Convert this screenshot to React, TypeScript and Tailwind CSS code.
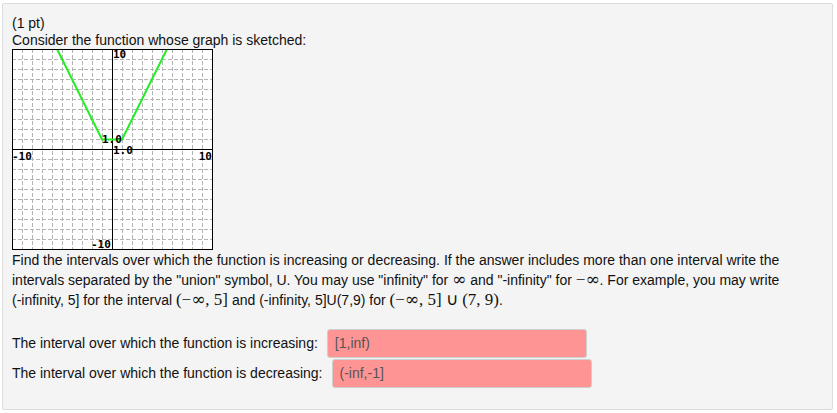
import React from "react";

const ticks = Array.from({ length: 21 }, (_, i) => i * 10);

function Graph() {
  return (
    <svg width="201" height="201" viewBox="0 0 201 201" className="block">
      <rect x="0" y="0" width="201" height="201" fill="#ffffff" />
      {/* grid */}
      {ticks.map((t) => (
        <g key={t} stroke="#b4b4b4" strokeWidth="1" strokeDasharray="4 2">
          <line x1={t + 0.5} y1="0" x2={t + 0.5} y2="201" />
          <line x1="0" y1={t + 0.5} x2="201" y2={t + 0.5} />
        </g>
      ))}
      {/* axes */}
      <line x1="100.5" y1="0" x2="100.5" y2="201" stroke="#000" strokeWidth="1" />
      <line x1="0" y1="100.5" x2="201" y2="100.5" stroke="#000" strokeWidth="1" />
      {/* function */}
      <polyline
        points="45,0 90,90.5 110,90.5 155,0"
        fill="none"
        stroke="#22ee22"
        strokeWidth="2"
      />
      {/* labels */}
      <g
        fontFamily='"DejaVu Sans Mono", "Liberation Mono", monospace'
        fontWeight="bold"
        fontSize="11"
        fill="#000"
      >
        <text x="101" y="9">10</text>
        <text x="90" y="94">1.0</text>
        <text x="101" y="105">1.0</text>
        <text x="0" y="111">-10</text>
        <text x="200" y="111" textAnchor="end">10</text>
        <text x="79" y="199">-10</text>
      </g>
      {/* frame */}
      <rect x="0.5" y="0.5" width="200" height="200" fill="none" stroke="#000" strokeWidth="1" />
    </svg>
  );
}

function M({ children }: { children: React.ReactNode }) {
  return (
    <span className="font-['Liberation_Serif',serif] text-[17px] leading-none">{children}</span>
  );
}

function Inf() {
  return <span className="font-['DejaVu_Serif',serif] text-[17px] leading-none">∞</span>;
}

function AnswerRow({ label, value }: { label: string; value: string }) {
  return (
    <div className="flex items-center h-[30px]">
      <span>{label}</span>
      <div className="ml-[9px] w-[260px] h-[29px] rounded-[3px] border border-[#cfcfcf] bg-[#ff9494] px-[7px] flex items-center text-[#555]">
        {value}
      </div>
    </div>
  );
}

export default function App() {
  return (
    <div className="w-[837px] h-[413px] bg-white pt-[3px] pl-[2px] pr-[4px] pb-[3px] font-['Liberation_Sans',Arial,sans-serif] text-[14px] text-[#111]">
      <div className="h-full border border-[#dcdcdc] rounded-[2px] bg-[#f4f4f4] pl-[9px] pt-[11px]">
        <div className="leading-[16px]">(1 pt)</div>
        <div className="leading-[18px]">Consider the function whose graph is sketched:</div>
        <Graph />
        <p className="leading-[20px] whitespace-nowrap">
          Find the intervals over which the function is increasing or decreasing. If the answer includes more than one interval write the
          <br />
          intervals separated by the "union" symbol, U. You may use "infinity" for <Inf /> and "-infinity" for <M>−</M><Inf />. For example, you may write
          <br />
          (-infinity, 5] for the interval <M>(−</M><Inf /><M>, 5]</M> and (-infinity, 5]U(7,9) for <M>(−</M><Inf /><M>, 5] ∪ (7, 9)</M>.
        </p>
        <div className="mt-[18px]">
          <AnswerRow label="The interval over which the function is increasing:" value="[1,inf)" />
          <AnswerRow label="The interval over which the function is decreasing:" value="(-inf,-1]" />
        </div>
      </div>
    </div>
  );
}
